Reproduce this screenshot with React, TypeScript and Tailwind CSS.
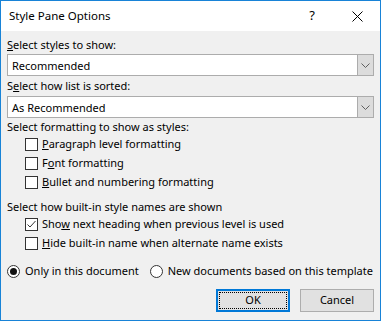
import React from "react";

const font = { fontFamily: '"Segoe UI", "Noto Sans", sans-serif' };

const Caret = () => (
  <svg width="9" height="5" viewBox="0 0 9 5" fill="none">
    <path d="M0.5 0.5L4.5 4.5L8.5 0.5" stroke="#606060" strokeWidth="1" />
  </svg>
);

const Dropdown = ({ value }: { value: string }) => (
  <div className="flex h-[22px] border border-[#acacac] bg-white">
    <div className="flex flex-1 items-center pl-[4px] text-[11px] leading-none">{value}</div>
    <div className="flex w-[16px] items-center justify-center border-l border-[#acacac] bg-[#dcdcdc]">
      <Caret />
    </div>
  </div>
);

const Check = ({ checked, children }: { checked?: boolean; children: React.ReactNode }) => (
  <div className="flex h-[19px] items-center pl-[18px]">
    <div className="flex h-[13px] w-[13px] items-center justify-center border border-[#333333] bg-white">
      {checked && (
        <svg width="11" height="11" viewBox="0 0 11 11" fill="none">
          <path d="M1.5 5.5L4 8L9.5 2" stroke="#333333" strokeWidth="1" />
        </svg>
      )}
    </div>
    <span className="ml-[4px] whitespace-nowrap text-[11px]">{children}</span>
  </div>
);

const Radio = ({ checked, children }: { checked?: boolean; children: React.ReactNode }) => (
  <div className="flex items-center">
    <div className="flex h-[13px] w-[13px] items-center justify-center rounded-full border border-[#333333] bg-white">
      {checked && <div className="h-[7px] w-[7px] rounded-full bg-[#111111]" />}
    </div>
    <span className="ml-[5px] whitespace-nowrap text-[11px]">{children}</span>
  </div>
);

export default function App() {
  return (
    <div
      className="flex h-[321px] w-[381px] flex-col border border-[#1883d7] bg-[#f0f0f0] text-black"
      style={font}
    >
      {/* Title bar */}
      <div className="flex h-[30px] items-center bg-white pl-[8px]">
        <span className="flex-1 text-[11.5px]">Style Pane Options</span>
        <span className="mr-[37px] text-[13px]">?</span>
        <svg width="11" height="11" viewBox="0 0 11 11" className="mr-[17px]">
          <path d="M0.5 0.5L10.5 10.5M10.5 0.5L0.5 10.5" stroke="#000" strokeWidth="1" />
        </svg>
      </div>

      <div className="flex flex-1 flex-col px-[6px] pt-[6px]">
        <div className="h-[16px] text-[11px] leading-[16px]">
          <u>S</u>elect styles to show:
        </div>
        <div className="mt-[1px]">
          <Dropdown value="Recommended" />
        </div>
        <div className="mt-[2px] h-[16px] text-[11px] leading-[16px]">
          S<u>e</u>lect how list is sorted:
        </div>
        <div className="mt-[2px]">
          <Dropdown value="As Recommended" />
        </div>

        <div className="mt-[1px] h-[16px] text-[11px] leading-[16px]">
          Select formatting to show as styles:
        </div>
        <Check>
          <u>P</u>aragraph level formatting
        </Check>
        <Check>
          F<u>o</u>nt formatting
        </Check>
        <Check>
          <u>B</u>ullet and numbering formatting
        </Check>

        <div className="mt-[7px] h-[16px] text-[11px] leading-[16px]">
          Select how built-in style names are shown
        </div>
        <Check checked>
          Sho<u>w</u> next heading when previous level is used
        </Check>
        <Check>
          <u>H</u>ide built-in name when alternate name exists
        </Check>

        <div className="mt-[9px] flex h-[18px] items-center gap-[11px]">
          <Radio checked>Only in this document</Radio>
          <Radio>New documents based on this template</Radio>
        </div>

        <div className="mt-[9px] flex justify-end gap-[10px]">
          <button className="flex h-[23px] w-[74px] items-center justify-center border-2 border-[#0078d7] bg-[#e1e1e1] p-[1px] text-[11px]">
            <span className="flex h-full w-full items-center justify-center border border-dotted border-black">
              OK
            </span>
          </button>
          <button className="flex h-[23px] w-[74px] items-center justify-center border border-[#adadad] bg-[#e1e1e1] text-[11px]">
            Cancel
          </button>
        </div>
      </div>
    </div>
  );
}
